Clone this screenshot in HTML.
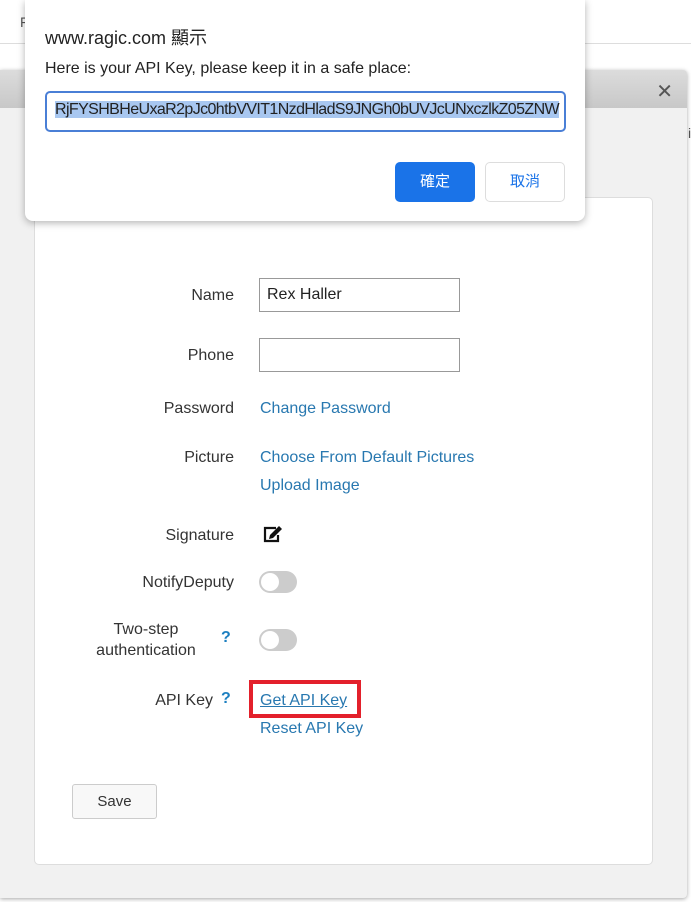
<!DOCTYPE html>
<html><head><meta charset="utf-8"><style>
*{box-sizing:border-box;margin:0;padding:0}
body{width:691px;height:902px;position:relative;overflow:hidden;background:#fff;font-family:"Liberation Sans","Noto Sans CJK TC",sans-serif;color:#333}
.topline{position:absolute;left:0;top:43px;width:691px;height:1px;background:#ddd}
.modal{position:absolute;left:0;top:70px;width:687px;height:828px;background:#f1f1f1;border-radius:0 4px 4px 0;box-shadow:0 1px 4px rgba(0,0,0,.35)}
.mhead{height:38px;background:linear-gradient(#dcdcdc,#c8c8c8);border-radius:0 4px 0 0}
.close{position:absolute;right:14px;top:9px;font-size:20px;color:#555}
.card{position:absolute;left:34px;top:127px;width:619px;height:668px;background:#fff;border:1px solid #ddd;border-radius:5px}
.lbl{position:absolute;right:457px;font-size:16px;color:#333;text-align:right;line-height:21px}
.abs{position:absolute}
.inp{position:absolute;left:259px;width:201px;height:34px;border:1px solid #999;font-size:16px;padding:7px 7px;color:#222}
a{color:#2878b0;text-decoration:none;font-size:16px;position:absolute;left:260px;line-height:21px}
.tog{position:absolute;left:259px;width:38px;height:22px;border-radius:11px;background:#ccc}
.tog:after{content:"";position:absolute;left:2px;top:2px;width:18px;height:18px;border-radius:9px;background:#fff}
.q{position:absolute;left:221px;color:#1c7fc0;font-weight:bold;font-size:16px}
.save{position:absolute;left:72px;top:784px;width:85px;height:35px;border:1px solid #ccc;border-radius:3px;background:#f8f8f8;font-size:15px;text-align:center;line-height:33px;color:#333}
.dlg{position:absolute;left:25px;top:0;width:560px;height:221px;background:#fff;border-radius:0 0 8px 8px;box-shadow:0 2px 8px rgba(0,0,0,.3)}
.dlg .t{position:absolute;left:20px;top:24px;font-size:18px;color:#222}
.dlg .m{position:absolute;left:20px;top:60px;font-size:16px;color:#222}
.key{position:absolute;left:20px;top:91px;width:521px;height:41px;border:2px solid #4a7fd6;border-radius:5px;padding:8px 8px;overflow:hidden;white-space:nowrap;font-size:16px;letter-spacing:-0.6px;color:#222}
.key span{background:#a8c7f0}
.ok{position:absolute;left:370px;top:162px;width:80px;height:40px;background:#1a73e8;color:#fff;border-radius:5px;text-align:center;line-height:40px;font-size:15px}
.cn{position:absolute;left:460px;top:162px;width:80px;height:40px;border:1px solid #ddd;color:#1a73e8;border-radius:5px;text-align:center;line-height:38px;font-size:15px}
</style></head><body>
<div class="abs" style="left:20px;top:14px;font-size:14px;color:#555">F</div>
<div class="topline"></div>
<div class="abs" style="left:688px;top:125px;font-size:14px;color:#555">i</div>
<div class="modal"><div class="mhead"></div><div class="close">✕</div><div class="card"></div></div>
<div class="lbl" style="top:285px">Name</div>
<div class="inp" style="top:278px">Rex Haller</div>
<div class="lbl" style="top:345px">Phone</div>
<div class="inp" style="top:338px"></div>
<div class="lbl" style="top:398px">Password</div>
<a style="top:398px">Change Password</a>
<div class="lbl" style="top:447px">Picture</div>
<a style="top:447px">Choose From Default Pictures</a>
<a style="top:475px">Upload Image</a>
<div class="lbl" style="top:525px">Signature</div>
<svg class="abs" style="left:263px;top:526px" width="19" height="17" viewBox="0 0 19 17"><path d="M13 2H2v13h13V9" fill="none" stroke="#111" stroke-width="2.2"/><path d="M16 0l3 3-9 9-4 1 1-4z" fill="#111"/></svg>
<div class="lbl" style="top:572px">NotifyDeputy</div>
<div class="tog" style="top:571px"></div>
<div class="lbl" style="top:619px;right:480px;text-align:center;width:130px">Two-step<br>authentication</div>
<div class="q" style="top:629px">?</div>
<div class="tog" style="top:629px"></div>
<div class="lbl" style="top:690px;right:478px">API Key</div>
<div class="q" style="top:690px">?</div>
<div class="abs" style="left:249px;top:680px;width:112px;height:38px;border:4px solid #e3202b"></div>
<a style="top:690px;text-decoration:underline">Get API Key</a>
<a style="top:718px">Reset API Key</a>
<div class="save">Save</div>
<div class="dlg">
<div class="t">www.ragic.com 顯示</div>
<div class="m">Here is your API Key, please keep it in a safe place:</div>
<div class="key"><span>RjFYSHBHeUxaR2pJc0htbVVIT1NzdHladS9JNGh0bUVJcUNxczlkZ05ZNW</span></div>
<div class="ok">確定</div>
<div class="cn">取消</div>
</div>
</body></html>
